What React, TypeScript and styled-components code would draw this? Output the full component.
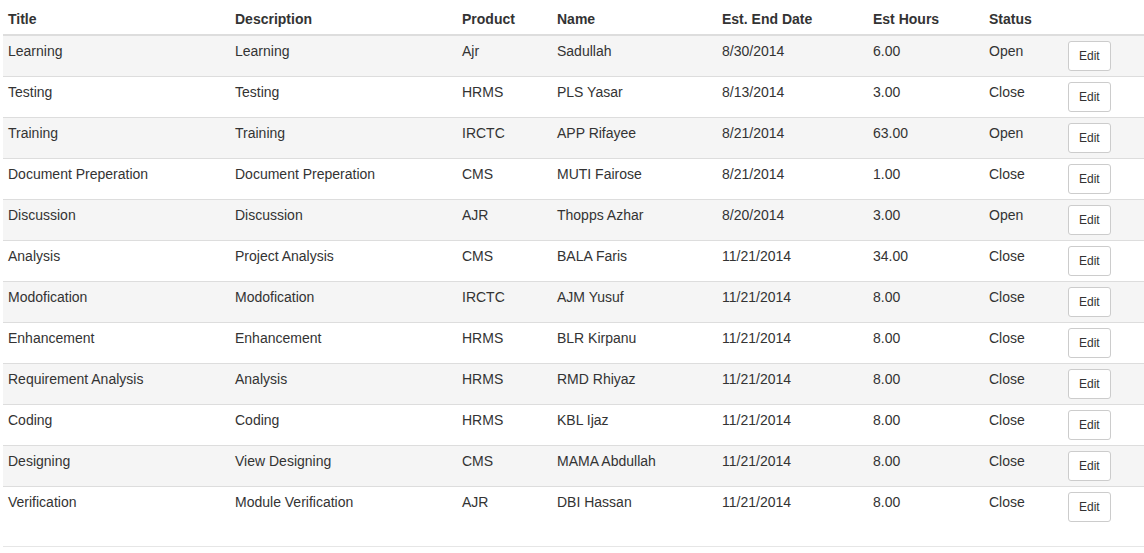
import React from "react";
import styled, { createGlobalStyle } from "styled-components";

const GlobalStyle = createGlobalStyle`
  html, body {
    margin: 0;
    padding: 0;
    background: #ffffff;
    overflow: hidden;
  }
  body {
    font-family: "Liberation Sans", Arial, Helvetica, sans-serif;
    font-size: 14px;
    line-height: 1.42857143;
    color: #333333;
  }
`;

const Page = styled.div`
  padding: 4px 0 0 3px;
`;

const Table = styled.table`
  width: 1141px;
  table-layout: fixed;
  border-collapse: collapse;
  border-spacing: 0;
`;

const HeadCell = styled.th`
  text-align: left;
  font-weight: bold;
  padding: 5px;
  line-height: 20px;
  vertical-align: bottom;
  border-bottom: 2px solid #dddddd;
  white-space: nowrap;
`;

const Row = styled.tr<{ $striped: boolean }>`
  background: ${(p) => (p.$striped ? "#f5f5f5" : "#ffffff")};
  &:last-child td {
    padding-bottom: 24px;
    border-bottom: 1px solid #e6e6e6;
  }
`;

const Cell = styled.td`
  padding: 5px;
  line-height: 20px;
  vertical-align: top;
  border-top: 1px solid #dddddd;
  white-space: nowrap;
`;

const ActionCell = styled(Cell)`
  padding-left: 5px;
`;

const EditButton = styled.button`
  display: inline-block;
  font-family: "Liberation Sans", Arial, Helvetica, sans-serif;
  font-size: 12px;
  line-height: 18px;
  padding: 5px 10px;
  color: #333333;
  background: #ffffff;
  border: 1px solid #cccccc;
  border-radius: 3px;
  cursor: pointer;
`;

type Task = {
  title: string;
  description: string;
  product: string;
  name: string;
  date: string;
  hours: string;
  status: string;
};

const tasks: Task[] = [
  { title: "Learning", description: "Learning", product: "Ajr", name: "Sadullah", date: "8/30/2014", hours: "6.00", status: "Open" },
  { title: "Testing", description: "Testing", product: "HRMS", name: "PLS Yasar", date: "8/13/2014", hours: "3.00", status: "Close" },
  { title: "Training", description: "Training", product: "IRCTC", name: "APP Rifayee", date: "8/21/2014", hours: "63.00", status: "Open" },
  { title: "Document Preperation", description: "Document Preperation", product: "CMS", name: "MUTI Fairose", date: "8/21/2014", hours: "1.00", status: "Close" },
  { title: "Discussion", description: "Discussion", product: "AJR", name: "Thopps Azhar", date: "8/20/2014", hours: "3.00", status: "Open" },
  { title: "Analysis", description: "Project Analysis", product: "CMS", name: "BALA Faris", date: "11/21/2014", hours: "34.00", status: "Close" },
  { title: "Modofication", description: "Modofication", product: "IRCTC", name: "AJM Yusuf", date: "11/21/2014", hours: "8.00", status: "Close" },
  { title: "Enhancement", description: "Enhancement", product: "HRMS", name: "BLR Kirpanu", date: "11/21/2014", hours: "8.00", status: "Close" },
  { title: "Requirement Analysis", description: "Analysis", product: "HRMS", name: "RMD Rhiyaz", date: "11/21/2014", hours: "8.00", status: "Close" },
  { title: "Coding", description: "Coding", product: "HRMS", name: "KBL Ijaz", date: "11/21/2014", hours: "8.00", status: "Close" },
  { title: "Designing", description: "View Designing", product: "CMS", name: "MAMA Abdullah", date: "11/21/2014", hours: "8.00", status: "Close" },
  { title: "Verification", description: "Module Verification", product: "AJR", name: "DBI Hassan", date: "11/21/2014", hours: "8.00", status: "Close" },
];

const columns = [
  { label: "Title", width: 227 },
  { label: "Description", width: 227 },
  { label: "Product", width: 95 },
  { label: "Name", width: 165 },
  { label: "Est. End Date", width: 151 },
  { label: "Est Hours", width: 116 },
  { label: "Status", width: 79 },
  { label: "", width: 81 },
];

export default function App() {
  return (
    <>
      <GlobalStyle />
      <Page>
        <Table>
          <colgroup>
            {columns.map((c, i) => (
              <col key={i} style={{ width: c.width }} />
            ))}
          </colgroup>
          <thead>
            <tr>
              {columns.map((c, i) => (
                <HeadCell key={i}>{c.label}</HeadCell>
              ))}
            </tr>
          </thead>
          <tbody>
            {tasks.map((t, i) => (
              <Row key={i} $striped={i % 2 === 0}>
                <Cell>{t.title}</Cell>
                <Cell>{t.description}</Cell>
                <Cell>{t.product}</Cell>
                <Cell>{t.name}</Cell>
                <Cell>{t.date}</Cell>
                <Cell>{t.hours}</Cell>
                <Cell>{t.status}</Cell>
                <ActionCell>
                  <EditButton type="button">Edit</EditButton>
                </ActionCell>
              </Row>
            ))}
          </tbody>
        </Table>
      </Page>
    </>
  );
}
